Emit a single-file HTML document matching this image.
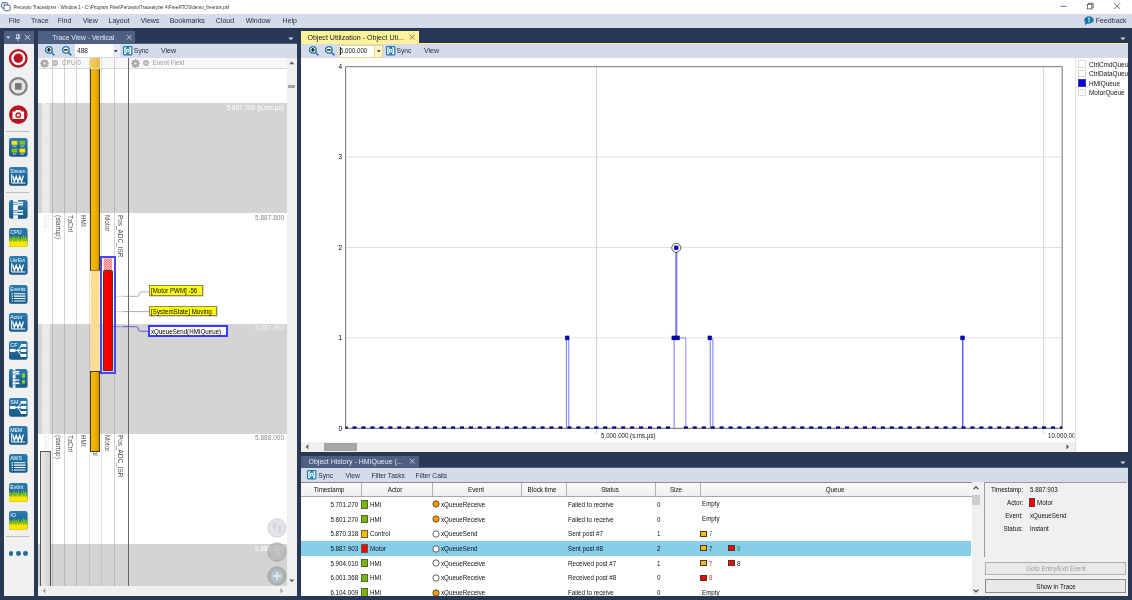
<!DOCTYPE html>
<html><head><meta charset="utf-8"><title>Percepio Tracealyzer</title>
<style>
html,body{margin:0;padding:0;}
body{width:1132px;height:600px;overflow:hidden;position:relative;background:#293955;font-family:"Liberation Sans",sans-serif;}
body div, body svg{position:absolute;box-sizing:border-box;}
.t{white-space:nowrap;}
svg{overflow:visible;}
</style></head><body>
<div style="left:0;top:0;width:1132px;height:600px;will-change:transform;">
<div style="left:0px;top:0px;width:1132px;height:13.7px;background:#ffffff;"></div>
<div style="left:0px;top:13.7px;width:1132px;height:14px;background:#d6dbe9;"></div>
<svg style="left:1px;top:1.5px" width="10" height="10" viewBox="0 0 10 10"><rect x="0.6" y="0.6" width="6.2" height="5.6" rx="1.4" fill="#fff" stroke="#3c5a8c" stroke-width="0.9"/><rect x="3" y="3" width="6.2" height="5.8" rx="1.4" fill="#fff" stroke="#3c5a8c" stroke-width="0.9"/><path d="M2.4 2.2h2.4M2.4 3.6h1.4" stroke="#3c5a8c" stroke-width="0.7"/></svg>
<div class="t" style="left:13.4px;top:4px;height:7px;line-height:7px;font-size:4.6px;color:#333;">Percepio Tracealyzer - Window 1 - C:\Program Files\Percepio\Tracealyzer 4\FreeRTOS\demo_freertos.psf</div>
<svg style="left:1056px;top:0" width="76" height="13" viewBox="0 0 76 13"><path d="M4.7 6.3h5.8" stroke="#333" stroke-width="0.7" fill="none"/><rect x="31.3" y="4.3" width="4.6" height="4.6" fill="none" stroke="#333" stroke-width="0.7"/><path d="M32.6 4.3v-1.1h4.6v4.6h-1.3" fill="none" stroke="#333" stroke-width="0.7"/><path d="M58.3 3.1l5.9 5.9M64.2 3.1l-5.9 5.9" stroke="#333" stroke-width="0.7" fill="none"/></svg>
<div class="t" style="left:8.8px;top:16px;height:9px;line-height:9px;font-size:7px;color:#1e2746;">File</div>
<div class="t" style="left:31px;top:16px;height:9px;line-height:9px;font-size:7px;color:#1e2746;">Trace</div>
<div class="t" style="left:57.7px;top:16px;height:9px;line-height:9px;font-size:7px;color:#1e2746;">Find</div>
<div class="t" style="left:82.7px;top:16px;height:9px;line-height:9px;font-size:7px;color:#1e2746;">View</div>
<div class="t" style="left:108.5px;top:16px;height:9px;line-height:9px;font-size:7px;color:#1e2746;">Layout</div>
<div class="t" style="left:140.8px;top:16px;height:9px;line-height:9px;font-size:7px;color:#1e2746;">Views</div>
<div class="t" style="left:169.7px;top:16px;height:9px;line-height:9px;font-size:7px;color:#1e2746;">Bookmarks</div>
<div class="t" style="left:215.8px;top:16px;height:9px;line-height:9px;font-size:7px;color:#1e2746;">Cloud</div>
<div class="t" style="left:245.7px;top:16px;height:9px;line-height:9px;font-size:7px;color:#1e2746;">Window</div>
<div class="t" style="left:282.6px;top:16px;height:9px;line-height:9px;font-size:7px;color:#1e2746;">Help</div>
<svg style="left:1084px;top:15.5px" width="11" height="10" viewBox="0 0 11 10"><ellipse cx="5" cy="4" rx="4.8" ry="3.7" fill="#1a78ae"/><path d="M1.2 5.5L0.9 9.2L4.2 7z" fill="#1a78ae"/><rect x="4.5" y="1.6" width="1.1" height="3" fill="#fff"/><rect x="4.5" y="5.2" width="1.1" height="1.1" fill="#fff"/></svg>
<div class="t" style="left:1095.8px;top:16px;height:9px;line-height:9px;font-size:7px;color:#1e2746;">Feedback</div>
<div style="left:3.5px;top:31.1px;width:30.5px;height:12.7px;background:#4d6082;"></div>
<svg style="left:3.5px;top:31.200px" width="31" height="12" viewBox="0 0 31 12"><path d="M2.100 5.400h4.200l-2.100 2.400z" fill="#dfe4ee"/><path d="M12.600 3.600h2.600v3.700h-2.600zM11.600 7.300h4.600M13.900 7.300v2.800" stroke="#dfe4ee" stroke-width="0.800" fill="none"/><path d="M14.800 3.600v3.700" stroke="#dfe4ee" stroke-width="0.800"/><path d="M20.800 3.900l5.400 4.900M26.200 3.900l-5.400 4.900" stroke="#dfe4ee" stroke-width="0.900"/></svg>
<div style="left:4px;top:43.75px;width:30px;height:552.25px;background:#f0f0f0;"></div>
<svg style="left:8px;top:48px" width="21" height="21" viewBox="0 0 21 21"><circle cx="10.3" cy="10.3" r="8.200" fill="#fff" stroke="#bd1220" stroke-width="2.400"/><circle cx="10.3" cy="10.3" r="4.700" fill="#bd1220"/></svg>
<svg style="left:8px;top:76px" width="21" height="21" viewBox="0 0 21 21"><circle cx="10.3" cy="10.4" r="8.3" fill="#e4e4e4" stroke="#808080" stroke-width="2.200"/><rect x="7" y="7.1" width="6.6" height="6.6" fill="#777"/></svg>
<svg style="left:8px;top:104px" width="21" height="21" viewBox="0 0 21 21"><circle cx="10.3" cy="10.6" r="9.3" fill="#bd1220"/><path d="M4.5 7.6h2.6l1-1.5h4.4l1 1.5h2.6v7.4h-11.6z" fill="#fff"/><circle cx="10.3" cy="11.2" r="2.9" fill="#bd1220"/><circle cx="10.3" cy="11.2" r="1.5" fill="#fff"/></svg>
<div style="left:6px;top:130.9px;width:23px;height:0.9px;background:#bdbdbd;"></div>
<div style="left:6px;top:192.29999999999998px;width:23px;height:0.9px;background:#bdbdbd;"></div>
<div style="left:6px;top:536.0px;width:23px;height:0.9px;background:#bdbdbd;"></div>
<svg style="left:9px;top:138.4px" width="19" height="19" viewBox="0 0 19 19"><defs><linearGradient id="g138" x1="0" y1="0" x2="0" y2="1"><stop offset="0" stop-color="#2a7cb2"/><stop offset="1" stop-color="#175985"/></linearGradient><clipPath id="c138"><rect x="0" y="0" width="18.600" height="18.800" rx="2.400"/></clipPath></defs><g clip-path="url(#c138)"><rect x="0" y="0" width="19" height="19" fill="url(#g138)"/><rect x="2.600" y="2.800" width="5.800" height="4" fill="#ffe600"/><rect x="10.400" y="2.800" width="5.800" height="4" fill="#7cc11f"/><rect x="2.600" y="10.600" width="5.800" height="4" fill="#7cc11f"/><rect x="10.400" y="10.600" width="5.800" height="4" fill="#ffe600"/><path d="M3.600 8.200h3.800M11.400 8.200h3.800M3.600 16h3.800M11.400 16h3.800" stroke="#d4e4f0" stroke-width="0.900"/></g></svg>
<svg style="left:9px;top:167px" width="19" height="19" viewBox="0 0 19 19"><defs><linearGradient id="g167" x1="0" y1="0" x2="0" y2="1"><stop offset="0" stop-color="#2a7cb2"/><stop offset="1" stop-color="#175985"/></linearGradient><clipPath id="c167"><rect x="0" y="0" width="18.600" height="18.800" rx="2.400"/></clipPath></defs><g clip-path="url(#c167)"><rect x="0" y="0" width="19" height="19" fill="url(#g167)"/><text x="1.300" y="5.900" font-size="4.7" fill="#ffffff" font-family="Liberation Sans">Stream</text><path d="M2.700 7.200v8.800h13.700" stroke="#fff" stroke-width="1" fill="none"/><path d="M3.700 8.600l1.700 5.800l1.800-5l1.800 5l1.800-5l1.800 5l1.800-5.800" stroke="#fff" stroke-width="1.350" fill="none"/></g></svg>
<svg style="left:9px;top:200px" width="19" height="19" viewBox="0 0 19 19"><defs><linearGradient id="g200" x1="0" y1="0" x2="0" y2="1"><stop offset="0" stop-color="#2a7cb2"/><stop offset="1" stop-color="#175985"/></linearGradient><clipPath id="c200"><rect x="0" y="0" width="18.600" height="18.800" rx="2.400"/></clipPath></defs><g clip-path="url(#c200)"><rect x="0" y="0" width="19" height="19" fill="url(#g200)"/><rect x="4.200" y="0" width="4.700" height="19" fill="#fff"/><path d="M4.200 2.300h4.700M4.200 4.300h4.700M4.200 10.600h4.700M4.200 12.200h4.700M4.200 14.900h4.700" stroke="#2a76aa" stroke-width="0.800"/><rect x="8.900" y="1.700" width="5.200" height="1.400" fill="#fff"/><rect x="8.900" y="3.600" width="5.200" height="1.900" fill="#fff"/><rect x="8.900" y="10" width="5.200" height="1.500" fill="#fff"/><rect x="8.900" y="12.900" width="5.200" height="1.900" fill="#fff"/></g></svg>
<svg style="left:9px;top:228px" width="19" height="19" viewBox="0 0 19 19"><defs><linearGradient id="g228" x1="0" y1="0" x2="0" y2="1"><stop offset="0" stop-color="#2a7cb2"/><stop offset="1" stop-color="#175985"/></linearGradient><clipPath id="c228"><rect x="0" y="0" width="18.600" height="18.800" rx="2.400"/></clipPath></defs><g clip-path="url(#c228)"><rect x="0" y="0" width="19" height="19" fill="url(#g228)"/><text x="1.300" y="5.900" font-size="5.4" fill="#ffffff" font-family="Liberation Sans">CPU</text><path d="M0 19V10l1-2.600l1.100 4l1.100-3l1 2l1-4l1.100 4.200l1-2l1 2.400l1.100-4.600l1 3.600l1.100 1.200l1-3.400l1 3l1.100-4.400l1 3.800l1-3l1.100 3.600l1-3.400V19z" fill="#77bd1f"/><path d="M0 19v-5l1.200-1.400l1.200 1.800l1.200-2.600l1.200 2.400l1.200-1.400l1.200 1.600l1.200-2.800l1.200 2.600l1.200-1.400l1.200 1.200l1.200-2.400l1.200 2.600l1.200-1.800l1.200 2l1.200-2.400l0.800 1.600V19z" fill="#ffe400"/></g></svg>
<svg style="left:9px;top:256.2px" width="19" height="19" viewBox="0 0 19 19"><defs><linearGradient id="g256" x1="0" y1="0" x2="0" y2="1"><stop offset="0" stop-color="#2a7cb2"/><stop offset="1" stop-color="#175985"/></linearGradient><clipPath id="c256"><rect x="0" y="0" width="18.600" height="18.800" rx="2.400"/></clipPath></defs><g clip-path="url(#c256)"><rect x="0" y="0" width="19" height="19" fill="url(#g256)"/><text x="1.300" y="5.900" font-size="4.9" fill="#ffffff" font-family="Liberation Sans">UsrEvt</text><path d="M2.700 7.200v8.800h13.700" stroke="#fff" stroke-width="1" fill="none"/><path d="M3.700 8.600l1.700 5.800l1.800-5l1.800 5l1.800-5l1.800 5l1.800-5.800" stroke="#fff" stroke-width="1.350" fill="none"/></g></svg>
<svg style="left:9px;top:284.5px" width="19" height="19" viewBox="0 0 19 19"><defs><linearGradient id="g284" x1="0" y1="0" x2="0" y2="1"><stop offset="0" stop-color="#2a7cb2"/><stop offset="1" stop-color="#175985"/></linearGradient><clipPath id="c284"><rect x="0" y="0" width="18.600" height="18.800" rx="2.400"/></clipPath></defs><g clip-path="url(#c284)"><rect x="0" y="0" width="19" height="19" fill="url(#g284)"/><text x="1.300" y="5.900" font-size="5.0" fill="#ffffff" font-family="Liberation Sans">Events</text><path d="M2.600 8.700h1.400M5 8.700h11.400M2.600 11.100h1.400M5 11.100h11.400M2.600 13.500h1.400M5 13.500h11.400M2.600 15.900h1.400M5 15.900h11.400" stroke="#fff" stroke-width="1.050"/></g></svg>
<svg style="left:9px;top:313px" width="19" height="19" viewBox="0 0 19 19"><defs><linearGradient id="g313" x1="0" y1="0" x2="0" y2="1"><stop offset="0" stop-color="#2a7cb2"/><stop offset="1" stop-color="#175985"/></linearGradient><clipPath id="c313"><rect x="0" y="0" width="18.600" height="18.800" rx="2.400"/></clipPath></defs><g clip-path="url(#c313)"><rect x="0" y="0" width="19" height="19" fill="url(#g313)"/><text x="1.300" y="5.900" font-size="5.2" fill="#ffffff" font-family="Liberation Sans">Actor</text><path d="M2.700 7.200v8.800h13.700" stroke="#fff" stroke-width="1" fill="none"/><path d="M3.700 8.600l1.700 5.800l1.800-5l1.800 5l1.800-5l1.800 5l1.800-5.800" stroke="#fff" stroke-width="1.350" fill="none"/></g></svg>
<svg style="left:9px;top:341px" width="19" height="19" viewBox="0 0 19 19"><defs><linearGradient id="g341" x1="0" y1="0" x2="0" y2="1"><stop offset="0" stop-color="#2a7cb2"/><stop offset="1" stop-color="#175985"/></linearGradient><clipPath id="c341"><rect x="0" y="0" width="18.600" height="18.800" rx="2.400"/></clipPath></defs><g clip-path="url(#c341)"><rect x="0" y="0" width="19" height="19" fill="url(#g341)"/><text x="1.300" y="5.900" font-size="5.4" fill="#ffffff" font-family="Liberation Sans">CF</text><path d="M6 9.400h3l3-4.400M9 9.400h3M9 9.400l3 5" stroke="#fff" stroke-width="1" fill="none"/><circle cx="9" cy="9.400" r="1.100" fill="#fff"/><rect x="11.700" y="2.900" width="5.700" height="2.900" rx="0.400" fill="#fff"/><rect x="11.700" y="7.900" width="5.700" height="3" rx="0.400" fill="#fff"/><rect x="11.700" y="13.100" width="5.700" height="3" rx="0.400" fill="#fff"/><rect x="0.900" y="7.900" width="5.600" height="3" rx="0.400" fill="#fff"/></g></svg>
<svg style="left:9px;top:369.4px" width="19" height="19" viewBox="0 0 19 19"><defs><linearGradient id="g369" x1="0" y1="0" x2="0" y2="1"><stop offset="0" stop-color="#2a7cb2"/><stop offset="1" stop-color="#175985"/></linearGradient><clipPath id="c369"><rect x="0" y="0" width="18.600" height="18.800" rx="2.400"/></clipPath></defs><g clip-path="url(#c369)"><rect x="0" y="0" width="19" height="19" fill="url(#g369)"/><rect x="3.700" y="0" width="2.800" height="19" fill="#fff"/><path d="M3.700 1.600h2.800M3.700 5h2.800M3.700 9.600h2.800M3.700 12.800h2.800M3.700 16h2.800" stroke="#2a76aa" stroke-width="0.800"/><rect x="6.500" y="2" width="3.800" height="1.300" fill="#fff"/><rect x="6.500" y="3.800" width="3.800" height="1.600" fill="#fff"/><rect x="6.500" y="10.400" width="3.800" height="1.300" fill="#fff"/><rect x="6.500" y="13.400" width="3.800" height="1.700" fill="#fff"/><rect x="13.100" y="4.200" width="2.800" height="4.700" fill="#8ed11f"/><rect x="13.100" y="11.200" width="2.800" height="3.300" fill="#8ed11f"/></g></svg>
<svg style="left:9px;top:398px" width="19" height="19" viewBox="0 0 19 19"><defs><linearGradient id="g398" x1="0" y1="0" x2="0" y2="1"><stop offset="0" stop-color="#2a7cb2"/><stop offset="1" stop-color="#175985"/></linearGradient><clipPath id="c398"><rect x="0" y="0" width="18.600" height="18.800" rx="2.400"/></clipPath></defs><g clip-path="url(#c398)"><rect x="0" y="0" width="19" height="19" fill="url(#g398)"/><text x="1.300" y="5.900" font-size="5.4" fill="#ffffff" font-family="Liberation Sans">SM</text><path d="M6 9.400h3l3-4.400M9 9.400h3M9 9.400l3 5" stroke="#fff" stroke-width="1" fill="none"/><circle cx="9" cy="9.400" r="1.100" fill="#fff"/><rect x="11.700" y="2.900" width="5.700" height="2.900" rx="0.400" fill="#fff"/><rect x="11.700" y="7.900" width="5.700" height="3" rx="0.400" fill="#fff"/><rect x="11.700" y="13.100" width="5.700" height="3" rx="0.400" fill="#fff"/><rect x="0.900" y="7.900" width="5.600" height="3" rx="0.400" fill="#fff"/></g></svg>
<svg style="left:9px;top:426px" width="19" height="19" viewBox="0 0 19 19"><defs><linearGradient id="g426" x1="0" y1="0" x2="0" y2="1"><stop offset="0" stop-color="#2a7cb2"/><stop offset="1" stop-color="#175985"/></linearGradient><clipPath id="c426"><rect x="0" y="0" width="18.600" height="18.800" rx="2.400"/></clipPath></defs><g clip-path="url(#c426)"><rect x="0" y="0" width="19" height="19" fill="url(#g426)"/><text x="1.300" y="5.900" font-size="5.2" fill="#ffffff" font-family="Liberation Sans">MEM</text><path d="M2.700 7.200v8.800h13.700" stroke="#fff" stroke-width="1" fill="none"/><path d="M3.700 8.600l1.700 5.800l1.800-5l1.800 5l1.800-5l1.800 5l1.800-5.800" stroke="#fff" stroke-width="1.350" fill="none"/></g></svg>
<svg style="left:9px;top:454.4px" width="19" height="19" viewBox="0 0 19 19"><defs><linearGradient id="g454" x1="0" y1="0" x2="0" y2="1"><stop offset="0" stop-color="#2a7cb2"/><stop offset="1" stop-color="#175985"/></linearGradient><clipPath id="c454"><rect x="0" y="0" width="18.600" height="18.800" rx="2.400"/></clipPath></defs><g clip-path="url(#c454)"><rect x="0" y="0" width="19" height="19" fill="url(#g454)"/><text x="1.300" y="5.900" font-size="5.2" fill="#ffffff" font-family="Liberation Sans">AWS</text><path d="M2.600 8.700h1.400M5 8.700h11.400M2.600 11.100h1.400M5 11.100h11.400M2.600 13.500h1.400M5 13.500h11.400M2.600 15.900h1.400M5 15.900h11.400" stroke="#fff" stroke-width="1.050"/></g></svg>
<svg style="left:9px;top:482.6px" width="19" height="19" viewBox="0 0 19 19"><defs><linearGradient id="g482" x1="0" y1="0" x2="0" y2="1"><stop offset="0" stop-color="#2a7cb2"/><stop offset="1" stop-color="#175985"/></linearGradient><clipPath id="c482"><rect x="0" y="0" width="18.600" height="18.800" rx="2.400"/></clipPath></defs><g clip-path="url(#c482)"><rect x="0" y="0" width="19" height="19" fill="url(#g482)"/><text x="1.300" y="5.900" font-size="5.0" fill="#ffffff" font-family="Liberation Sans">EvtInt</text><path d="M0 19V10l1-2.600l1.100 4l1.100-3l1 2l1-4l1.100 4.200l1-2l1 2.400l1.100-4.600l1 3.600l1.100 1.200l1-3.400l1 3l1.100-4.400l1 3.800l1-3l1.100 3.600l1-3.400V19z" fill="#77bd1f"/><path d="M0 19v-5l1.200-1.400l1.200 1.800l1.200-2.600l1.200 2.400l1.200-1.400l1.200 1.600l1.200-2.800l1.200 2.600l1.200-1.400l1.200 1.200l1.200-2.400l1.200 2.600l1.200-1.800l1.200 2l1.200-2.400l0.800 1.600V19z" fill="#ffe400"/></g></svg>
<svg style="left:9px;top:511px" width="19" height="19" viewBox="0 0 19 19"><defs><linearGradient id="g511" x1="0" y1="0" x2="0" y2="1"><stop offset="0" stop-color="#2a7cb2"/><stop offset="1" stop-color="#175985"/></linearGradient><clipPath id="c511"><rect x="0" y="0" width="18.600" height="18.800" rx="2.400"/></clipPath></defs><g clip-path="url(#c511)"><rect x="0" y="0" width="19" height="19" fill="url(#g511)"/><text x="1.300" y="5.900" font-size="5.4" fill="#ffffff" font-family="Liberation Sans">IO</text><path d="M0 19V10l1-2.600l1.100 4l1.100-3l1 2l1-4l1.100 4.200l1-2l1 2.400l1.100-4.600l1 3.600l1.100 1.200l1-3.400l1 3l1.100-4.400l1 3.800l1-3l1.100 3.600l1-3.400V19z" fill="#77bd1f"/><path d="M0 19v-5l1.200-1.400l1.200 1.800l1.200-2.600l1.200 2.400l1.200-1.400l1.200 1.600l1.200-2.800l1.200 2.600l1.200-1.400l1.200 1.200l1.200-2.400l1.200 2.600l1.200-1.800l1.200 2l1.200-2.400l0.800 1.600V19z" fill="#ffe400"/></g></svg>
<div style="left:8.6px;top:550.9px;width:4.8px;height:4.8px;border-radius:50%;background:#1f6a9c"></div>
<div style="left:15.799999999999999px;top:550.9px;width:4.8px;height:4.8px;border-radius:50%;background:#1f6a9c"></div>
<div style="left:22.900000000000002px;top:550.9px;width:4.8px;height:4.8px;border-radius:50%;background:#1f6a9c"></div>
<div style="left:38px;top:31.2px;width:97px;height:12.6px;background:#4d6082;"></div>
<div class="t" style="left:52.3px;top:33px;height:9px;line-height:9px;font-size:6.8px;color:#e6eaf3;">Trace View - Vertical</div>
<svg style="left:126px;top:34px" width="7" height="7" viewBox="0 0 7 7"><path d="M1 1l4.6 4.6M5.6 1l-4.600 4.600" stroke="#d6dbe9" stroke-width="0.800"/></svg>
<svg style="left:288px;top:36.600px" width="6" height="4" viewBox="0 0 6 4"><path d="M0.400 0.400h5l-2.500 2.800z" fill="#d6dbe9"/></svg>
<div style="left:38px;top:42.8px;width:258.7px;height:1.2px;background:#4d6082;"></div>
<div style="left:38px;top:43.8px;width:258.7px;height:13.9px;background:#d6dbe9;"></div>
<svg style="left:45.099999999999994px;top:46.099999999999994px" width="11" height="11" viewBox="0 0 11 11"><circle cx="3.900" cy="3.900" r="3.250" fill="#fff" stroke="#1a78ae" stroke-width="1.400"/><path d="M6.500 6.500l2.900 2.900" stroke="#1a78ae" stroke-width="1.500"/><path d="M3.900 2.100v3.600M2.100 3.900h3.600" stroke="#0a0a0a" stroke-width="1.400"/></svg>
<svg style="left:62.2px;top:46.099999999999994px" width="11" height="11" viewBox="0 0 11 11"><circle cx="3.900" cy="3.900" r="3.250" fill="#fff" stroke="#1a78ae" stroke-width="1.400"/><path d="M6.500 6.500l2.900 2.900" stroke="#1a78ae" stroke-width="1.500"/><path d="M2.100 3.900h3.600" stroke="#0a0a0a" stroke-width="1.400"/></svg>
<div style="left:75.3px;top:44.4px;width:37.4px;height:12.8px;background:#ffffff;"></div>
<div style="left:112.7px;top:44.4px;width:7px;height:12.8px;background:#e6ecfa;"></div>
<div class="t" style="left:77px;top:46px;height:9px;line-height:9px;font-size:6.6px;color:#222;">488</div>
<svg style="left:114.2px;top:49.600px" width="4" height="3" viewBox="0 0 4 3"><path d="M0 0.300h3.600l-1.800 2z" fill="#111"/></svg>
<svg style="left:122.7px;top:45.9px" width="10" height="10" viewBox="0 0 10 10"><rect x="0" y="0" width="9.400" height="9.400" rx="1.100" fill="#1a78ae"/><path d="M3.400 1.900H1.900v5.600h1.500M6 1.900h1.500v5.600H6" fill="none" stroke="#fff" stroke-width="1.400"/><circle cx="4.700" cy="4.700" r="1.900" fill="#fff"/><circle cx="4.700" cy="4.700" r="0.800" fill="#1a78ae"/></svg>
<div class="t" style="left:134px;top:46px;height:9px;line-height:9px;font-size:6.6px;color:#1e2746;">Sync</div>
<div class="t" style="left:161px;top:46px;height:9px;line-height:9px;font-size:7px;color:#1e2746;">View</div>
<div style="left:38px;top:57.7px;width:258.7px;height:528px;background:#ffffff;"></div>
<div style="left:38px;top:57.7px;width:249px;height:11.2px;background:#f8f8f8;border-bottom:0.8px solid #d8d8d8;"></div>
<div style="left:38px;top:103.3px;width:249px;height:109.60000000000001px;background:#d4d4d4;"></div>
<div style="left:38px;top:323.7px;width:249px;height:110.0px;background:#d4d4d4;"></div>
<div style="left:38px;top:543.9px;width:249px;height:41.80000000000007px;background:#d4d4d4;"></div>
<svg style="left:0;top:0" width="130" height="600" viewBox="0 0 130 600"><defs><pattern id="pkw" width="2.360" height="2.360" patternUnits="userSpaceOnUse"><rect width="1.180" height="1.180" fill="#ffffff"/><rect x="1.180" y="1.180" width="1.180" height="1.180" fill="#ffffff"/></pattern></defs><rect x="41.700" y="68.900" width="8" height="516.800" fill="url(#pkw)"/></svg>
<div style="left:52.0px;top:57.7px;width:0.9px;height:528px;background:rgba(120,120,120,0.32);"></div>
<div style="left:64.0px;top:57.7px;width:0.9px;height:528px;background:rgba(120,120,120,0.32);"></div>
<div style="left:76.1px;top:57.7px;width:0.9px;height:528px;background:rgba(120,120,120,0.32);"></div>
<div style="left:113.89999999999999px;top:57.7px;width:0.9px;height:528px;background:rgba(120,120,120,0.32);"></div>
<div style="left:101.2px;top:57.7px;width:0.7px;height:528px;background:rgba(120,120,120,0.2);"></div>
<div style="left:89.1px;top:57.7px;width:0.7px;height:528px;background:rgba(120,120,120,0.2);"></div>
<div style="left:127.8px;top:57.7px;width:1.2px;height:528px;background:#666;"></div>
<svg style="left:39.8px;top:58.5px" width="9" height="9" viewBox="-4.500 -4.500 9 9"><g fill="#a2a2a2"><rect x="-0.900" y="-4.300" width="1.800" height="8.600" transform="rotate(0)"/><rect x="-0.900" y="-4.300" width="1.800" height="8.600" transform="rotate(45)"/><rect x="-0.900" y="-4.300" width="1.800" height="8.600" transform="rotate(90)"/><rect x="-0.900" y="-4.300" width="1.800" height="8.600" transform="rotate(135)"/></g><circle r="3" fill="#a2a2a2"/><circle r="1.300" fill="#f6f6f6"/></svg>
<svg style="left:52px;top:60.2px" width="6" height="6" viewBox="-3 -3 6 6"><circle r="2.900" fill="#b4b4b4"/><path d="M-1.600 0h3.200" stroke="#e8e8e8" stroke-width="1"/></svg>
<div class="t" style="left:62px;top:58px;height:9px;line-height:9px;font-size:6.4px;color:#a0a0a0;">CPU 0</div>
<svg style="left:130.5px;top:58.5px" width="9" height="9" viewBox="-4.500 -4.500 9 9"><g fill="#a2a2a2"><rect x="-0.900" y="-4.300" width="1.800" height="8.600" transform="rotate(0)"/><rect x="-0.900" y="-4.300" width="1.800" height="8.600" transform="rotate(45)"/><rect x="-0.900" y="-4.300" width="1.800" height="8.600" transform="rotate(90)"/><rect x="-0.900" y="-4.300" width="1.800" height="8.600" transform="rotate(135)"/></g><circle r="3" fill="#a2a2a2"/><circle r="1.300" fill="#f6f6f6"/></svg>
<svg style="left:142.6px;top:60.2px" width="6" height="6" viewBox="-3 -3 6 6"><circle r="2.900" fill="#b4b4b4"/><path d="M-1.600 0h3.200" stroke="#e8e8e8" stroke-width="1"/></svg>
<div class="t" style="left:152.8px;top:58px;height:9px;line-height:9px;font-size:6.3px;color:#9c9c9c;">Event Field</div>
<div class="t" style="left:91.100px;top:435.200px;width:8px;line-height:8px;font-size:6.400px;color:#4c4c4c;writing-mode:vertical-rl;">Control</div>
<div style="left:90.2px;top:57.7px;width:9.9px;height:10.8px;background:linear-gradient(90deg,#f6cb55,#e8bb48);"></div>
<div style="left:90.2px;top:68.5px;width:9.9px;height:202.2px;background:linear-gradient(90deg,#f8bb00,#f0b000 50%,#d79800);border:0.9px solid #4e3a00;border-top:none;"></div>
<svg style="left:0;top:0" width="130" height="600" viewBox="0 0 130 600"><defs><pattern id="pko" width="2.360" height="2.360" patternUnits="userSpaceOnUse"><rect width="1.180" height="1.180" fill="#f9bb20"/><rect x="1.180" y="1.180" width="1.180" height="1.180" fill="#f9bb20"/></pattern></defs><rect x="90.700" y="270.700" width="8.900" height="100" fill="#fff"/><rect x="90.700" y="270.700" width="8.900" height="100" fill="url(#pko)"/></svg>
<div style="left:90.2px;top:370.7px;width:9.9px;height:81.2px;background:linear-gradient(90deg,#f8bb00,#f0b000 50%,#d79800);border:0.9px solid #4e3a00;"></div>
<div style="left:100.2px;top:256.2px;width:15.6px;height:117.5px;background:transparent;border:2px solid #4646ff;"></div>
<svg style="left:0;top:0" width="130" height="600" viewBox="0 0 130 600"><defs><pattern id="pkr" width="2.360" height="2.360" patternUnits="userSpaceOnUse"><rect width="1.180" height="1.180" fill="#ff2c2c"/><rect x="1.180" y="1.180" width="1.180" height="1.180" fill="#ff2c2c"/></pattern></defs><rect x="103.600" y="258.200" width="8.500" height="12.400" fill="#fff"/><rect x="103.600" y="258.200" width="8.500" height="12.400" fill="url(#pkr)"/></svg>
<div style="left:102.8px;top:270.4px;width:9.8px;height:100.4px;background:linear-gradient(90deg,#ff0000,#ea0000);border:0.800px solid #4c3434;border-radius:1.200px 1.200px 0 0;"></div>
<div class="t" style="left:41.8px;top:214.6px;width:8px;line-height:8px;font-size:6.400px;color:#e6e6e6;writing-mode:vertical-rl;">IDLE</div>
<div class="t" style="left:53.8px;top:214.6px;width:8px;line-height:8px;font-size:6.400px;color:#4c4c4c;writing-mode:vertical-rl;">(startup)</div>
<div class="t" style="left:66.4px;top:214.6px;width:8px;line-height:8px;font-size:6.400px;color:#4c4c4c;writing-mode:vertical-rl;">TzCtrl</div>
<div class="t" style="left:79.2px;top:214.6px;width:8px;line-height:8px;font-size:6.400px;color:#4c4c4c;writing-mode:vertical-rl;">HMI</div>
<div class="t" style="left:102.8px;top:214.6px;width:8px;line-height:8px;font-size:6.400px;color:#4c4c4c;writing-mode:vertical-rl;">Motor</div>
<div class="t" style="left:116.2px;top:214.6px;width:8px;line-height:8px;font-size:6.400px;color:#4c4c4c;writing-mode:vertical-rl;">Pos_ADC_ISR</div>
<div class="t" style="left:41.8px;top:435.2px;width:8px;line-height:8px;font-size:6.400px;color:#e6e6e6;writing-mode:vertical-rl;">IDLE</div>
<div class="t" style="left:53.8px;top:435.2px;width:8px;line-height:8px;font-size:6.400px;color:#4c4c4c;writing-mode:vertical-rl;">(startup)</div>
<div class="t" style="left:66.4px;top:435.2px;width:8px;line-height:8px;font-size:6.400px;color:#4c4c4c;writing-mode:vertical-rl;">TzCtrl</div>
<div class="t" style="left:79.2px;top:435.2px;width:8px;line-height:8px;font-size:6.400px;color:#4c4c4c;writing-mode:vertical-rl;">HMI</div>
<div class="t" style="left:102.8px;top:435.2px;width:8px;line-height:8px;font-size:6.400px;color:#4c4c4c;writing-mode:vertical-rl;">Motor</div>
<div class="t" style="left:116.2px;top:435.2px;width:8px;line-height:8px;font-size:6.400px;color:#4c4c4c;writing-mode:vertical-rl;">Pos_ADC_ISR</div>
<div style="left:40px;top:451px;width:10.7px;height:134.7px;background:linear-gradient(90deg,#e9e9e9,#d2d2d2);border:0.900px solid #555;border-bottom:none;border-radius:1px 1px 0 0;"></div>
<div class="t" style="right:848px;top:103px;height:9px;line-height:9px;font-size:6.5px;color:#ffffff;text-align:right;">5.887.700 (s.ms.µs)</div>
<div class="t" style="right:848px;top:213px;height:9px;line-height:9px;font-size:6.5px;color:#8a8a8a;text-align:right;">5.887.800</div>
<div class="t" style="right:848px;top:323px;height:9px;line-height:9px;font-size:6.5px;color:#f0f0f0;text-align:right;">5.887.900</div>
<div class="t" style="right:848px;top:433px;height:9px;line-height:9px;font-size:6.5px;color:#8a8a8a;text-align:right;">5.888.000</div>
<div class="t" style="right:848px;top:544px;height:9px;line-height:9px;font-size:6.5px;color:#ffffff;text-align:right;">5.888.100</div>
<svg style="left:0;top:0" width="300" height="600" viewBox="0 0 300 600"><g fill="none" stroke-width="0.700"><path d="M112.600 296.300H123" stroke="#888" stroke-dasharray="1 1"/><path d="M123 296.300H137.200c1.900 0 1.800-0.700 2-2.200s0.500-2.200 2.600-2.200H149.300" stroke="#888"/><path d="M112.600 311.600H123" stroke="#888" stroke-dasharray="1 1"/><path d="M123 311.600H149.300" stroke="#888"/><path d="M112.600 326.700H123" stroke="#2a2ad0" stroke-dasharray="1 1"/><path d="M123 326.700H135.600c2 0 2.300 0.800 2.700 2.300s0.900 2.300 3 2.300H148.300" stroke="#2a2ad0"/></g></svg>
<div style="left:149.3px;top:285.4px;width:53.3px;height:10.2px;background:#ffff00;border:0.800px solid #8a8a58;box-shadow:0.400px 0.400px 0 #9a9a80;"></div>
<div class="t" style="left:150.8px;top:286px;height:9px;line-height:9px;font-size:6.8px;color:#000;transform:scaleX(0.9);transform-origin:0 0;">[Motor PWM] -56</div>
<div style="left:149.3px;top:306.2px;width:67.3px;height:10px;background:#ffff00;border:0.800px solid #8a8a58;box-shadow:0.400px 0.400px 0 #9a9a80;"></div>
<div class="t" style="left:150.8px;top:307px;height:9px;line-height:9px;font-size:6.8px;color:#000;transform:scaleX(0.92);transform-origin:0 0;">[SystemState] Moving</div>
<div style="left:148.2px;top:325px;width:79.9px;height:11.8px;background:#ffffff;border:2px solid #3a3aff;"></div>
<div class="t" style="left:151px;top:327px;height:9px;line-height:9px;font-size:6.8px;color:#000;transform:scaleX(0.91);transform-origin:0 0;">xQueueSend(HMIQueue)</div>
<div style="left:287px;top:57.7px;width:9.7px;height:528px;background:#f0f0f0;"></div>
<svg style="left:289px;top:60.500px" width="6" height="4" viewBox="0 0 6 4"><path d="M0.200 3.200h5.200l-2.600-2.800z" fill="#606060"/></svg>
<svg style="left:289px;top:578.800px" width="6" height="4" viewBox="0 0 6 4"><path d="M0.200 0.400h5.200l-2.600 2.800z" fill="#606060"/></svg>
<div style="left:288.2px;top:84.6px;width:7.2px;height:3.7px;background:#a6a6a6;"></div>
<div style="left:38px;top:585.7px;width:258.7px;height:9.9px;background:#f0f0f0;"></div>
<svg style="left:42px;top:587.800px" width="4" height="6" viewBox="0 0 4 6"><path d="M3.400 0.200v5.200l-2.800-2.600z" fill="#a0a0a0"/></svg>
<svg style="left:279.600px;top:587.800px" width="4" height="6" viewBox="0 0 4 6"><path d="M0.400 0.200v5.200l2.800-2.600z" fill="#a0a0a0"/></svg>
<svg style="left:266.5px;top:517.8px" width="20" height="20" viewBox="-10 -10 20 20"><circle r="9.200" fill="#dfe1e3" stroke="#cdcdcd" stroke-width="0.800" fill-opacity="0.92"/><rect x="-3.800" y="-5" width="2.400" height="6" fill="#cdd5db"/><rect x="1.400" y="-2" width="2.400" height="6.500" fill="#cdd5db"/></svg>
<svg style="left:266.5px;top:542.3px" width="20" height="20" viewBox="-10 -10 20 20"><circle r="9.200" fill="#a8a8a8" stroke="#a4a4a4" stroke-width="0.800" fill-opacity="0.55"/><path d="M-2.500 -3l5.500 6" stroke="#cfcfcf" stroke-width="1.600" stroke-opacity="0.700"/></svg>
<svg style="left:266.5px;top:565.8px" width="20" height="20" viewBox="-10 -10 20 20"><circle r="9.200" fill="#adadad" stroke="#a4a4a4" stroke-width="0.800" fill-opacity="0.92"/><circle r="6.300" fill="#a9c4d8"/><path d="M-3.900 0h7.800M0 -3.900v7.800" stroke="#ece6c6" stroke-width="1.900"/></svg>
<div style="left:301px;top:31.4px;width:117.7px;height:12.4px;background:#fff29d;"></div>
<div class="t" style="left:307.4px;top:33px;height:10px;line-height:10px;font-size:7.1px;color:#1a1a1a;">Object Utilization - Object Uti...</div>
<svg style="left:409.300px;top:34px" width="7" height="7" viewBox="0 0 7 7"><path d="M1 1l4.600 4.600M5.600 1l-4.600 4.600" stroke="#6a6a50" stroke-width="0.800"/></svg>
<div style="left:301px;top:42.6px;width:827.2px;height:1.4px;background:#fff29d;"></div>
<svg style="left:1119.800px;top:36.600px" width="6" height="4" viewBox="0 0 6 4"><path d="M0.400 0.400h5l-2.500 2.800z" fill="#d6dbe9"/></svg>
<div style="left:301px;top:44px;width:827.2px;height:14.3px;background:#d6dbe9;"></div>
<svg style="left:308.8px;top:46.099999999999994px" width="11" height="11" viewBox="0 0 11 11"><circle cx="3.900" cy="3.900" r="3.250" fill="#fff" stroke="#1a78ae" stroke-width="1.400"/><path d="M6.500 6.500l2.900 2.900" stroke="#1a78ae" stroke-width="1.500"/><path d="M3.900 2.100v3.600M2.100 3.900h3.600" stroke="#0a0a0a" stroke-width="1.400"/></svg>
<svg style="left:325.0px;top:46.099999999999994px" width="11" height="11" viewBox="0 0 11 11"><circle cx="3.900" cy="3.900" r="3.250" fill="#fff" stroke="#1a78ae" stroke-width="1.400"/><path d="M6.500 6.500l2.900 2.900" stroke="#1a78ae" stroke-width="1.500"/><path d="M2.100 3.900h3.600" stroke="#0a0a0a" stroke-width="1.400"/></svg>
<div style="left:338.7px;top:44.8px;width:36.6px;height:13px;background:#ffffff;border:0.800px solid #ecd588;"></div>
<div style="left:375.3px;top:44.8px;width:7.3px;height:13px;background:#fdf4bf;border:0.800px solid #ecd588;border-left:none;"></div>
<div class="t" style="left:340.4px;top:46px;height:9px;line-height:9px;font-size:6.9px;color:#222;transform:scaleX(0.89);transform-origin:0 0;">5.000.000</div>
<div style="left:340.4px;top:46.6px;width:0.7px;height:8.6px;background:#222;"></div>
<svg style="left:377.200px;top:49.700px" width="4" height="3" viewBox="0 0 4 3"><path d="M0 0.300h3.600l-1.800 2z" fill="#111"/></svg>
<svg style="left:385.5px;top:46px" width="10" height="10" viewBox="0 0 10 10"><rect x="0" y="0" width="9.400" height="9.400" rx="1.100" fill="#1a78ae"/><path d="M3.400 1.900H1.900v5.600h1.500M6 1.900h1.500v5.600H6" fill="none" stroke="#fff" stroke-width="1.400"/><circle cx="4.700" cy="4.700" r="1.900" fill="#fff"/><circle cx="4.700" cy="4.700" r="0.800" fill="#1a78ae"/></svg>
<div class="t" style="left:396.6px;top:46px;height:9px;line-height:9px;font-size:6.6px;color:#1e2746;">Sync</div>
<div class="t" style="left:424px;top:46px;height:9px;line-height:9px;font-size:7px;color:#1e2746;">View</div>
<div style="left:301px;top:58.3px;width:827.2px;height:383.3px;background:#ffffff;"></div>
<svg style="left:0;top:0" width="1132" height="600" viewBox="0 0 1132 600"><path d="M345.6 337.90H1062.2" stroke="#dcdcdc" stroke-width="0.900"/><path d="M345.6 247.50H1062.2" stroke="#dcdcdc" stroke-width="0.900"/><path d="M345.6 157.10H1062.2" stroke="#dcdcdc" stroke-width="0.900"/><path d="M596.5 66.7V433.8" stroke="#cfcfcf" stroke-width="0.900"/><path d="M1043.6 66.7V433.8" stroke="#cfcfcf" stroke-width="0.900"/><path d="M345.6 428.3V66.7H1062.2V428.3" fill="none" stroke="#767676" stroke-width="1"/><path d="M345.1 428.3H1062.7" stroke="#555" stroke-width="0.900"/><path d="M566.45 428.30V337.90" stroke="#7e7eff" stroke-width="1.05"/><path d="M568.78 428.30V337.90" stroke="#7e7eff" stroke-width="1.05"/><path d="M566.45 337.90H568.78" stroke="#7e7eff" stroke-width="0.900"/><path d="M674.12 428.30V337.90" stroke="#7e7eff" stroke-width="1.05"/><path d="M674.12 337.90H685.86V428.30" fill="none" stroke="#7e7eff" stroke-width="0.900"/><path d="M676.300 337.90V247.50" stroke="#7c7cff" stroke-width="2.200"/><path d="M710.27 428.30V337.90" stroke="#7e7eff" stroke-width="1.05"/><path d="M712.87 428.30V337.90" stroke="#7e7eff" stroke-width="1.05"/><path d="M962.71 428.30V337.90" stroke="#4a4aff" stroke-width="1.3"/><rect x="345.60" y="426.40" width="2.01" height="2.200" fill="#00008a"/><rect x="352.46" y="426.40" width="4.10" height="2.200" fill="#00008a"/><rect x="361.42" y="426.40" width="4.10" height="2.200" fill="#00008a"/><rect x="370.38" y="426.40" width="4.10" height="2.200" fill="#00008a"/><rect x="379.33" y="426.40" width="4.10" height="2.200" fill="#00008a"/><rect x="388.29" y="426.40" width="4.10" height="2.200" fill="#00008a"/><rect x="397.24" y="426.40" width="4.10" height="2.200" fill="#00008a"/><rect x="406.19" y="426.40" width="4.10" height="2.200" fill="#00008a"/><rect x="415.15" y="426.40" width="4.10" height="2.200" fill="#00008a"/><rect x="424.10" y="426.40" width="4.10" height="2.200" fill="#00008a"/><rect x="433.06" y="426.40" width="4.10" height="2.200" fill="#00008a"/><rect x="442.02" y="426.40" width="4.10" height="2.200" fill="#00008a"/><rect x="450.97" y="426.40" width="4.10" height="2.200" fill="#00008a"/><rect x="459.93" y="426.40" width="4.10" height="2.200" fill="#00008a"/><rect x="468.88" y="426.40" width="4.10" height="2.200" fill="#00008a"/><rect x="477.83" y="426.40" width="4.10" height="2.200" fill="#00008a"/><rect x="486.79" y="426.40" width="4.10" height="2.200" fill="#00008a"/><rect x="495.75" y="426.40" width="4.10" height="2.200" fill="#00008a"/><rect x="504.70" y="426.40" width="4.10" height="2.200" fill="#00008a"/><rect x="513.66" y="426.40" width="4.10" height="2.200" fill="#00008a"/><rect x="522.61" y="426.40" width="4.10" height="2.200" fill="#00008a"/><rect x="531.56" y="426.40" width="4.10" height="2.200" fill="#00008a"/><rect x="540.52" y="426.40" width="4.10" height="2.200" fill="#00008a"/><rect x="549.48" y="426.40" width="4.10" height="2.200" fill="#00008a"/><rect x="558.43" y="426.40" width="4.10" height="2.200" fill="#00008a"/><rect x="567.38" y="426.40" width="4.10" height="2.200" fill="#00008a"/><rect x="576.34" y="426.40" width="4.10" height="2.200" fill="#00008a"/><rect x="585.30" y="426.40" width="4.10" height="2.200" fill="#00008a"/><rect x="594.25" y="426.40" width="4.10" height="2.200" fill="#00008a"/><rect x="603.21" y="426.40" width="4.10" height="2.200" fill="#00008a"/><rect x="612.16" y="426.40" width="4.10" height="2.200" fill="#00008a"/><rect x="621.12" y="426.40" width="4.10" height="2.200" fill="#00008a"/><rect x="630.07" y="426.40" width="4.10" height="2.200" fill="#00008a"/><rect x="639.02" y="426.40" width="4.10" height="2.200" fill="#00008a"/><rect x="647.98" y="426.40" width="4.10" height="2.200" fill="#00008a"/><rect x="656.94" y="426.40" width="4.10" height="2.200" fill="#00008a"/><rect x="665.89" y="426.40" width="4.10" height="2.200" fill="#00008a"/><rect x="683.80" y="426.40" width="4.10" height="2.200" fill="#00008a"/><rect x="692.75" y="426.40" width="4.10" height="2.200" fill="#00008a"/><rect x="701.71" y="426.40" width="4.10" height="2.200" fill="#00008a"/><rect x="710.67" y="426.40" width="4.10" height="2.200" fill="#00008a"/><rect x="719.62" y="426.40" width="4.10" height="2.200" fill="#00008a"/><rect x="728.58" y="426.40" width="4.10" height="2.200" fill="#00008a"/><rect x="737.53" y="426.40" width="4.10" height="2.200" fill="#00008a"/><rect x="746.49" y="426.40" width="4.10" height="2.200" fill="#00008a"/><rect x="755.44" y="426.40" width="4.10" height="2.200" fill="#00008a"/><rect x="764.39" y="426.40" width="4.10" height="2.200" fill="#00008a"/><rect x="773.35" y="426.40" width="4.10" height="2.200" fill="#00008a"/><rect x="782.31" y="426.40" width="4.10" height="2.200" fill="#00008a"/><rect x="791.26" y="426.40" width="4.10" height="2.200" fill="#00008a"/><rect x="800.22" y="426.40" width="4.10" height="2.200" fill="#00008a"/><rect x="809.17" y="426.40" width="4.10" height="2.200" fill="#00008a"/><rect x="818.12" y="426.40" width="4.10" height="2.200" fill="#00008a"/><rect x="827.08" y="426.40" width="4.10" height="2.200" fill="#00008a"/><rect x="836.03" y="426.40" width="4.10" height="2.200" fill="#00008a"/><rect x="844.99" y="426.40" width="4.10" height="2.200" fill="#00008a"/><rect x="853.95" y="426.40" width="4.10" height="2.200" fill="#00008a"/><rect x="862.90" y="426.40" width="4.10" height="2.200" fill="#00008a"/><rect x="871.86" y="426.40" width="4.10" height="2.200" fill="#00008a"/><rect x="880.81" y="426.40" width="4.10" height="2.200" fill="#00008a"/><rect x="889.77" y="426.40" width="4.10" height="2.200" fill="#00008a"/><rect x="898.72" y="426.40" width="4.10" height="2.200" fill="#00008a"/><rect x="907.68" y="426.40" width="4.10" height="2.200" fill="#00008a"/><rect x="916.63" y="426.40" width="4.10" height="2.200" fill="#00008a"/><rect x="925.59" y="426.40" width="4.10" height="2.200" fill="#00008a"/><rect x="934.54" y="426.40" width="4.10" height="2.200" fill="#00008a"/><rect x="943.50" y="426.40" width="4.10" height="2.200" fill="#00008a"/><rect x="952.45" y="426.40" width="4.10" height="2.200" fill="#00008a"/><rect x="961.40" y="426.40" width="4.10" height="2.200" fill="#00008a"/><rect x="970.36" y="426.40" width="4.10" height="2.200" fill="#00008a"/><rect x="979.32" y="426.40" width="4.10" height="2.200" fill="#00008a"/><rect x="988.27" y="426.40" width="4.10" height="2.200" fill="#00008a"/><rect x="997.23" y="426.40" width="4.10" height="2.200" fill="#00008a"/><rect x="1006.18" y="426.40" width="4.10" height="2.200" fill="#00008a"/><rect x="1015.14" y="426.40" width="4.10" height="2.200" fill="#00008a"/><rect x="1024.09" y="426.40" width="4.10" height="2.200" fill="#00008a"/><rect x="1033.05" y="426.40" width="4.10" height="2.200" fill="#00008a"/><rect x="1042.00" y="426.40" width="4.10" height="2.200" fill="#00008a"/><rect x="1050.96" y="426.40" width="4.10" height="2.200" fill="#00008a"/><rect x="1059.91" y="426.40" width="2.29" height="2.200" fill="#00008a"/><rect x="565.37" y="336.00" width="3.600" height="3.800" fill="#0000e0" stroke="#00005a" stroke-width="0.600"/><rect x="671.96" y="336.00" width="3.600" height="3.800" fill="#0000e0" stroke="#00005a" stroke-width="0.600"/><rect x="675.69" y="336.00" width="3.600" height="3.800" fill="#0000e0" stroke="#00005a" stroke-width="0.600"/><rect x="708.02" y="336.00" width="3.600" height="3.800" fill="#0000e0" stroke="#00005a" stroke-width="0.600"/><rect x="960.73" y="336.00" width="3.600" height="3.800" fill="#0000e0" stroke="#00005a" stroke-width="0.600"/><circle cx="676.300" cy="247.80" r="4.500" fill="#fff" stroke="#333" stroke-width="0.800"/><rect x="674.50" y="246.00" width="3.600" height="3.600" fill="#0000e0" stroke="#00005a" stroke-width="0.600"/></svg>
<div class="t" style="right:790px;top:423px;height:11px;line-height:11px;font-size:7.4px;color:#000;text-align:right;transform:scaleX(0.88);transform-origin:100% 0;">0</div>
<div class="t" style="right:790px;top:332px;height:11px;line-height:11px;font-size:7.4px;color:#000;text-align:right;transform:scaleX(0.88);transform-origin:100% 0;">1</div>
<div class="t" style="right:790px;top:242px;height:11px;line-height:11px;font-size:7.4px;color:#000;text-align:right;transform:scaleX(0.88);transform-origin:100% 0;">2</div>
<div class="t" style="right:790px;top:151px;height:11px;line-height:11px;font-size:7.4px;color:#000;text-align:right;transform:scaleX(0.88);transform-origin:100% 0;">3</div>
<div class="t" style="right:790px;top:61px;height:11px;line-height:11px;font-size:7.4px;color:#000;text-align:right;transform:scaleX(0.88);transform-origin:100% 0;">4</div>
<div class="t" style="left:600.5px;top:431px;height:9px;line-height:9px;font-size:7px;color:#1a1a1a;transform:scaleX(0.88);transform-origin:0 0;">5.000.000 (s.ms.µs)</div>
<div class="t" style="left:1047.800px;top:431px;width:29.800px;height:9px;line-height:9px;font-size:7px;color:#1a1a1a;overflow:hidden;transform:scaleX(0.880);transform-origin:0 0;">10.000.000</div>
<div style="left:1074.6px;top:58px;width:53.6px;height:393.6px;background:#ffffff;border-left:0.900px solid #e2e2e2;"></div>
<div style="left:1078.3px;top:60.2px;width:7.5px;height:7.5px;background:#fff;border:0.700px solid #dadada;"></div>
<div class="t" style="left:1088.800px;top:60px;width:42.400px;height:9px;line-height:9px;font-size:6.900px;color:#111;overflow:hidden;transform:scaleX(0.930);transform-origin:0 0;">CtrlCmdQueue</div>
<div style="left:1078.3px;top:69.7px;width:7.5px;height:7.5px;background:#fff;border:0.700px solid #dadada;"></div>
<div class="t" style="left:1088.800px;top:69px;width:42.400px;height:9px;line-height:9px;font-size:6.900px;color:#111;overflow:hidden;transform:scaleX(0.930);transform-origin:0 0;">CtrlDataQueue</div>
<div style="left:1078.3px;top:79.2px;width:7.5px;height:7.5px;background:#0000ff;border:0.700px solid #3a3a7a;"></div>
<div class="t" style="left:1088.800px;top:79px;width:42.400px;height:9px;line-height:9px;font-size:6.900px;color:#111;overflow:hidden;transform:scaleX(0.930);transform-origin:0 0;">HMIQueue</div>
<div style="left:1078.3px;top:88.7px;width:7.5px;height:7.5px;background:#fff;border:0.700px solid #dadada;"></div>
<div class="t" style="left:1088.800px;top:88px;width:42.400px;height:9px;line-height:9px;font-size:6.900px;color:#111;overflow:hidden;transform:scaleX(0.930);transform-origin:0 0;">MotorQueue</div>
<div style="left:301px;top:441.6px;width:773.6px;height:10px;background:#f0f0f0;"></div>
<svg style="left:304.800px;top:444px" width="4" height="6" viewBox="0 0 4 6"><path d="M3.400 0.200v5.200l-2.800-2.600z" fill="#606060"/></svg>
<svg style="left:1066.200px;top:444px" width="4" height="6" viewBox="0 0 4 6"><path d="M0.400 0.200v5.200l2.800-2.600z" fill="#606060"/></svg>
<div style="left:324px;top:442.8px;width:32.8px;height:7.8px;background:#a6a6a6;"></div>
<div style="left:301px;top:455.8px;width:117.6px;height:11.6px;background:#4d6082;"></div>
<div class="t" style="left:308.5px;top:457px;height:9px;line-height:9px;font-size:7px;color:#e6eaf3;">Object History - HMIQueue (...</div>
<svg style="left:409.300px;top:458.300px" width="7" height="7" viewBox="0 0 7 7"><path d="M1 1l4.600 4.600M5.600 1l-4.600 4.600" stroke="#d6dbe9" stroke-width="0.800"/></svg>
<svg style="left:1119.800px;top:461px" width="6" height="4" viewBox="0 0 6 4"><path d="M0.400 0.400h5l-2.500 2.800z" fill="#d6dbe9"/></svg>
<div style="left:301px;top:467.4px;width:827.2px;height:128.2px;background:#ffffff;"></div>
<div style="left:301px;top:466.9px;width:827.2px;height:1.1px;background:#4d6082;"></div>
<div style="left:301px;top:467.9px;width:827.2px;height:14.3px;background:#d6dbe9;"></div>
<svg style="left:307px;top:470.3px" width="10" height="10" viewBox="0 0 10 10"><rect x="0" y="0" width="9.400" height="9.400" rx="1.100" fill="#1a78ae"/><path d="M3.400 1.900H1.900v5.600h1.500M6 1.900h1.500v5.600H6" fill="none" stroke="#fff" stroke-width="1.400"/><circle cx="4.700" cy="4.700" r="1.900" fill="#fff"/><circle cx="4.700" cy="4.700" r="0.800" fill="#1a78ae"/></svg>
<div class="t" style="left:318.3px;top:471px;height:9px;line-height:9px;font-size:6.6px;color:#1e2746;">Sync</div>
<div class="t" style="left:345.6px;top:471px;height:9px;line-height:9px;font-size:6.6px;color:#1e2746;">View</div>
<div class="t" style="left:371.5px;top:471px;height:9px;line-height:9px;font-size:6.6px;color:#1e2746;">Filter Tasks</div>
<div class="t" style="left:415.6px;top:471px;height:9px;line-height:9px;font-size:6.7px;color:#1e2746;">Filter Calls</div>
<div style="left:301px;top:482px;width:670.5px;height:14.7px;background:linear-gradient(#fbfbfb,#efefef);border-bottom:1px solid #a8a8a8;border-top:1px solid #8e8e8e;"></div>
<div style="left:360.8px;top:483px;width:0.9px;height:13px;background:#b4b4b4;"></div>
<div style="left:432.0px;top:483px;width:0.9px;height:13px;background:#b4b4b4;"></div>
<div style="left:521.2px;top:483px;width:0.9px;height:13px;background:#b4b4b4;"></div>
<div style="left:566.0px;top:483px;width:0.9px;height:13px;background:#b4b4b4;"></div>
<div style="left:654.7px;top:483px;width:0.9px;height:13px;background:#b4b4b4;"></div>
<div style="left:699.5px;top:483px;width:0.9px;height:13px;background:#b4b4b4;"></div>
<div class="t" style="left:229.39999999999998px;width:200px;top:485px;height:9px;line-height:9px;font-size:7px;color:#111;text-align:center;transform:scaleX(0.89);transform-origin:50% 0;">Timestamp</div>
<div class="t" style="left:295.4px;width:200px;top:485px;height:9px;line-height:9px;font-size:7px;color:#111;text-align:center;transform:scaleX(0.89);transform-origin:50% 0;">Actor</div>
<div class="t" style="left:375.6px;width:200px;top:485px;height:9px;line-height:9px;font-size:7px;color:#111;text-align:center;transform:scaleX(0.89);transform-origin:50% 0;">Event</div>
<div class="t" style="left:442px;width:200px;top:485px;height:9px;line-height:9px;font-size:7px;color:#111;text-align:center;transform:scaleX(0.89);transform-origin:50% 0;">Block time</div>
<div class="t" style="left:509.5px;width:200px;top:485px;height:9px;line-height:9px;font-size:7px;color:#111;text-align:center;transform:scaleX(0.89);transform-origin:50% 0;">Status</div>
<div class="t" style="left:576.3px;width:200px;top:485px;height:9px;line-height:9px;font-size:7px;color:#111;text-align:center;transform:scaleX(0.89);transform-origin:50% 0;">Size</div>
<div class="t" style="left:735px;width:200px;top:485px;height:9px;line-height:9px;font-size:7px;color:#111;text-align:center;transform:scaleX(0.89);transform-origin:50% 0;">Queue</div>
<div class="t" style="right:774.3px;top:500px;height:9px;line-height:9px;font-size:7px;color:#111;text-align:right;transform:scaleX(0.89);transform-origin:100% 0;">5.701.270</div>
<div style="left:361.2px;top:500.09999999999997px;width:6.8px;height:8.6px;background:#76b900;border:0.700px solid #5e5e40;"></div>
<div class="t" style="left:370px;top:500px;height:9px;line-height:9px;font-size:7px;color:#111;transform:scaleX(0.89);transform-origin:0 0;">HMI</div>
<svg style="left:431.7px;top:500.4px" width="8" height="8" viewBox="-4 -4 8 8"><circle r="3.150" fill="#ff9900" stroke="#3c3c3c" stroke-width="0.800"/></svg>
<div class="t" style="left:441px;top:500px;height:9px;line-height:9px;font-size:7px;color:#111;transform:scaleX(0.89);transform-origin:0 0;">xQueueReceive</div>
<div class="t" style="left:567.5px;top:500px;height:9px;line-height:9px;font-size:7px;color:#111;transform:scaleX(0.89);transform-origin:0 0;">Failed to receive</div>
<div class="t" style="left:656.9px;top:500px;height:9px;line-height:9px;font-size:7px;color:#111;transform:scaleX(0.89);transform-origin:0 0;">0</div>
<div class="t" style="left:701.9px;top:499px;height:9px;line-height:9px;font-size:7px;color:#111;transform:scaleX(0.89);transform-origin:0 0;">Empty</div>
<div class="t" style="right:774.3px;top:515px;height:9px;line-height:9px;font-size:7px;color:#111;text-align:right;transform:scaleX(0.89);transform-origin:100% 0;">5.801.270</div>
<div style="left:361.2px;top:514.8000000000001px;width:6.8px;height:8.6px;background:#76b900;border:0.700px solid #5e5e40;"></div>
<div class="t" style="left:370px;top:515px;height:9px;line-height:9px;font-size:7px;color:#111;transform:scaleX(0.89);transform-origin:0 0;">HMI</div>
<svg style="left:431.7px;top:515.1px" width="8" height="8" viewBox="-4 -4 8 8"><circle r="3.150" fill="#ff9900" stroke="#3c3c3c" stroke-width="0.800"/></svg>
<div class="t" style="left:441px;top:515px;height:9px;line-height:9px;font-size:7px;color:#111;transform:scaleX(0.89);transform-origin:0 0;">xQueueReceive</div>
<div class="t" style="left:567.5px;top:515px;height:9px;line-height:9px;font-size:7px;color:#111;transform:scaleX(0.89);transform-origin:0 0;">Failed to receive</div>
<div class="t" style="left:656.9px;top:515px;height:9px;line-height:9px;font-size:7px;color:#111;transform:scaleX(0.89);transform-origin:0 0;">0</div>
<div class="t" style="left:701.9px;top:514px;height:9px;line-height:9px;font-size:7px;color:#111;transform:scaleX(0.89);transform-origin:0 0;">Empty</div>
<div class="t" style="right:774.3px;top:529px;height:9px;line-height:9px;font-size:7px;color:#111;text-align:right;transform:scaleX(0.89);transform-origin:100% 0;">5.870.318</div>
<div style="left:361.2px;top:529.5px;width:6.8px;height:8.6px;background:#ffb800;border:0.700px solid #5e5e40;"></div>
<div class="t" style="left:370px;top:529px;height:9px;line-height:9px;font-size:7px;color:#111;transform:scaleX(0.89);transform-origin:0 0;">Control</div>
<svg style="left:431.7px;top:529.8px" width="8" height="8" viewBox="-4 -4 8 8"><circle r="3.150" fill="#ffffff" stroke="#3c3c3c" stroke-width="0.800"/></svg>
<div class="t" style="left:441px;top:529px;height:9px;line-height:9px;font-size:7px;color:#111;transform:scaleX(0.89);transform-origin:0 0;">xQueueSend</div>
<div class="t" style="left:567.5px;top:529px;height:9px;line-height:9px;font-size:7px;color:#111;transform:scaleX(0.89);transform-origin:0 0;">Sent post #7</div>
<div class="t" style="left:656.9px;top:529px;height:9px;line-height:9px;font-size:7px;color:#111;transform:scaleX(0.89);transform-origin:0 0;">1</div>
<div style="left:700.1px;top:530.6999999999999px;width:7px;height:6px;background:#ffb800;border:0.600px solid #4a3a2a;"></div>
<div class="t" style="left:708.6px;top:529px;height:9px;line-height:9px;font-size:7px;color:#1a9a3a;transform:scaleX(0.89);transform-origin:0 0;">7</div>
<div style="left:301px;top:541.3px;width:670.3px;height:14.6px;background:#87ceeb;"></div>
<div class="t" style="right:774.3px;top:544px;height:9px;line-height:9px;font-size:7px;color:#111;text-align:right;transform:scaleX(0.89);transform-origin:100% 0;">5.887.903</div>
<div style="left:361.2px;top:544.2px;width:6.8px;height:8.6px;background:#ff0000;border:0.700px solid #5e5e40;"></div>
<div class="t" style="left:370px;top:544px;height:9px;line-height:9px;font-size:7px;color:#111;transform:scaleX(0.89);transform-origin:0 0;">Motor</div>
<svg style="left:431.7px;top:544.5px" width="8" height="8" viewBox="-4 -4 8 8"><circle r="3.150" fill="#ffffff" stroke="#3c3c3c" stroke-width="0.800"/></svg>
<div class="t" style="left:441px;top:544px;height:9px;line-height:9px;font-size:7px;color:#111;transform:scaleX(0.89);transform-origin:0 0;">xQueueSend</div>
<div class="t" style="left:567.5px;top:544px;height:9px;line-height:9px;font-size:7px;color:#111;transform:scaleX(0.89);transform-origin:0 0;">Sent post #8</div>
<div class="t" style="left:656.9px;top:544px;height:9px;line-height:9px;font-size:7px;color:#111;transform:scaleX(0.89);transform-origin:0 0;">2</div>
<div style="left:700.1px;top:545.4px;width:7px;height:6px;background:#ffb800;border:0.600px solid #4a3a2a;"></div>
<div class="t" style="left:708.6px;top:544px;height:9px;line-height:9px;font-size:7px;color:#222;transform:scaleX(0.89);transform-origin:0 0;">7</div>
<div style="left:728.1px;top:545.4px;width:7px;height:6px;background:#ff0000;border:0.600px solid #4a3a2a;"></div>
<div class="t" style="left:736.6px;top:544px;height:9px;line-height:9px;font-size:7px;color:#1a9a3a;transform:scaleX(0.89);transform-origin:0 0;">8</div>
<div class="t" style="right:774.3px;top:559px;height:9px;line-height:9px;font-size:7px;color:#111;text-align:right;transform:scaleX(0.89);transform-origin:100% 0;">5.904.010</div>
<div style="left:361.2px;top:558.9px;width:6.8px;height:8.6px;background:#76b900;border:0.700px solid #5e5e40;"></div>
<div class="t" style="left:370px;top:559px;height:9px;line-height:9px;font-size:7px;color:#111;transform:scaleX(0.89);transform-origin:0 0;">HMI</div>
<svg style="left:431.7px;top:559.1999999999999px" width="8" height="8" viewBox="-4 -4 8 8"><circle r="3.150" fill="#ffffff" stroke="#3c3c3c" stroke-width="0.800"/></svg>
<div class="t" style="left:441px;top:559px;height:9px;line-height:9px;font-size:7px;color:#111;transform:scaleX(0.89);transform-origin:0 0;">xQueueReceive</div>
<div class="t" style="left:567.5px;top:559px;height:9px;line-height:9px;font-size:7px;color:#111;transform:scaleX(0.89);transform-origin:0 0;">Received post #7</div>
<div class="t" style="left:656.9px;top:559px;height:9px;line-height:9px;font-size:7px;color:#111;transform:scaleX(0.89);transform-origin:0 0;">1</div>
<div style="left:700.1px;top:560.0999999999999px;width:7px;height:6px;background:#ffb800;border:0.600px solid #4a3a2a;"></div>
<div class="t" style="left:708.6px;top:559px;height:9px;line-height:9px;font-size:7px;color:#e03030;transform:scaleX(0.89);transform-origin:0 0;">7</div>
<div style="left:728.1px;top:560.0999999999999px;width:7px;height:6px;background:#ff0000;border:0.600px solid #4a3a2a;"></div>
<div class="t" style="left:736.6px;top:559px;height:9px;line-height:9px;font-size:7px;color:#222;transform:scaleX(0.89);transform-origin:0 0;">8</div>
<div class="t" style="right:774.3px;top:573px;height:9px;line-height:9px;font-size:7px;color:#111;text-align:right;transform:scaleX(0.89);transform-origin:100% 0;">6.001.368</div>
<div style="left:361.2px;top:573.6px;width:6.8px;height:8.6px;background:#76b900;border:0.700px solid #5e5e40;"></div>
<div class="t" style="left:370px;top:573px;height:9px;line-height:9px;font-size:7px;color:#111;transform:scaleX(0.89);transform-origin:0 0;">HMI</div>
<svg style="left:431.7px;top:573.9px" width="8" height="8" viewBox="-4 -4 8 8"><circle r="3.150" fill="#ffffff" stroke="#3c3c3c" stroke-width="0.800"/></svg>
<div class="t" style="left:441px;top:573px;height:9px;line-height:9px;font-size:7px;color:#111;transform:scaleX(0.89);transform-origin:0 0;">xQueueReceive</div>
<div class="t" style="left:567.5px;top:573px;height:9px;line-height:9px;font-size:7px;color:#111;transform:scaleX(0.89);transform-origin:0 0;">Received post #8</div>
<div class="t" style="left:656.9px;top:573px;height:9px;line-height:9px;font-size:7px;color:#111;transform:scaleX(0.89);transform-origin:0 0;">0</div>
<div style="left:700.1px;top:574.8px;width:7px;height:6px;background:#ff0000;border:0.600px solid #4a3a2a;"></div>
<div class="t" style="left:708.6px;top:573px;height:9px;line-height:9px;font-size:7px;color:#e03030;transform:scaleX(0.89);transform-origin:0 0;">8</div>
<div class="t" style="right:774.3px;top:588px;height:9px;line-height:9px;font-size:7px;color:#111;text-align:right;transform:scaleX(0.89);transform-origin:100% 0;">6.104.009</div>
<div style="left:361.2px;top:588.3px;width:6.8px;height:8.6px;background:#76b900;border:0.700px solid #5e5e40;"></div>
<div class="t" style="left:370px;top:588px;height:9px;line-height:9px;font-size:7px;color:#111;transform:scaleX(0.89);transform-origin:0 0;">HMI</div>
<svg style="left:431.7px;top:588.5999999999999px" width="8" height="8" viewBox="-4 -4 8 8"><circle r="3.150" fill="#ff9900" stroke="#3c3c3c" stroke-width="0.800"/></svg>
<div class="t" style="left:441px;top:588px;height:9px;line-height:9px;font-size:7px;color:#111;transform:scaleX(0.89);transform-origin:0 0;">xQueueReceive</div>
<div class="t" style="left:567.5px;top:588px;height:9px;line-height:9px;font-size:7px;color:#111;transform:scaleX(0.89);transform-origin:0 0;">Failed to receive</div>
<div class="t" style="left:656.9px;top:588px;height:9px;line-height:9px;font-size:7px;color:#111;transform:scaleX(0.89);transform-origin:0 0;">0</div>
<div class="t" style="left:701.9px;top:588px;height:9px;line-height:9px;font-size:7px;color:#111;transform:scaleX(0.89);transform-origin:0 0;">Empty</div>
<div style="left:301px;top:595.6px;width:827.2px;height:4.4px;background:#293955;"></div>
<div style="left:972px;top:482.4px;width:9.4px;height:113.2px;background:#f0f0f0;"></div>
<svg style="left:973.400px;top:485.500px" width="6" height="4" viewBox="0 0 6 4"><path d="M0.600 3.200l2.400-2.400l2.400 2.400" fill="none" stroke="#404040" stroke-width="1.200"/></svg>
<svg style="left:973.400px;top:589px" width="6" height="4" viewBox="0 0 6 4"><path d="M0.600 0.600l2.400 2.400l2.400-2.400" fill="none" stroke="#404040" stroke-width="1.200"/></svg>
<div style="left:972px;top:495px;width:8.1px;height:9.5px;background:#cdcdcd;"></div>
<div style="left:981.4px;top:482.4px;width:146.8px;height:113.2px;background:#f0f0f0;"></div>
<div style="left:983.6px;top:482.4px;width:143.6px;height:74.8px;background:#f0f0f0;border-top:1px solid #9a9a9a;border-left:1px solid #9a9a9a;"></div>
<div class="t" style="right:108.79999999999995px;top:485px;height:9px;line-height:9px;font-size:7px;color:#111;text-align:right;transform:scaleX(0.89);transform-origin:100% 0;">Timestamp:</div>
<div class="t" style="right:108.79999999999995px;top:498px;height:9px;line-height:9px;font-size:7px;color:#111;text-align:right;transform:scaleX(0.89);transform-origin:100% 0;">Actor:</div>
<div class="t" style="right:108.79999999999995px;top:511px;height:9px;line-height:9px;font-size:7px;color:#111;text-align:right;transform:scaleX(0.89);transform-origin:100% 0;">Event:</div>
<div class="t" style="right:108.79999999999995px;top:524px;height:9px;line-height:9px;font-size:7px;color:#111;text-align:right;transform:scaleX(0.89);transform-origin:100% 0;">Status:</div>
<div class="t" style="left:1030px;top:485px;height:9px;line-height:9px;font-size:7px;color:#111;transform:scaleX(0.89);transform-origin:0 0;">5.887.903</div>
<div style="left:1029.1px;top:498.1px;width:6.3px;height:8.7px;background:#ff0000;border:0.600px solid #7a3030;"></div>
<div class="t" style="left:1037.2px;top:498px;height:9px;line-height:9px;font-size:7px;color:#111;transform:scaleX(0.89);transform-origin:0 0;">Motor</div>
<div class="t" style="left:1030px;top:511px;height:9px;line-height:9px;font-size:7px;color:#111;transform:scaleX(0.89);transform-origin:0 0;">xQueueSend</div>
<div class="t" style="left:1030px;top:524px;height:9px;line-height:9px;font-size:7px;color:#111;transform:scaleX(0.89);transform-origin:0 0;">Instant</div>
<div style="left:985.2px;top:561.7px;width:140.6px;height:13.4px;background:#e9e9e9;border:0.900px solid #adadad;"></div>
<div class="t" style="left:955.5px;width:200px;top:564px;height:9px;line-height:9px;font-size:7px;color:#a0a0a0;text-align:center;transform:scaleX(0.89);transform-origin:50% 0;">Goto Entry/Exit Event</div>
<div style="left:985.2px;top:579.2px;width:140.6px;height:13.4px;background:#e9e9e9;border:0.900px solid #8a8a8a;"></div>
<div class="t" style="left:955.5px;width:200px;top:582px;height:9px;line-height:9px;font-size:7px;color:#111;text-align:center;transform:scaleX(0.89);transform-origin:50% 0;">Show in Trace</div>
</div>
</body></html>
